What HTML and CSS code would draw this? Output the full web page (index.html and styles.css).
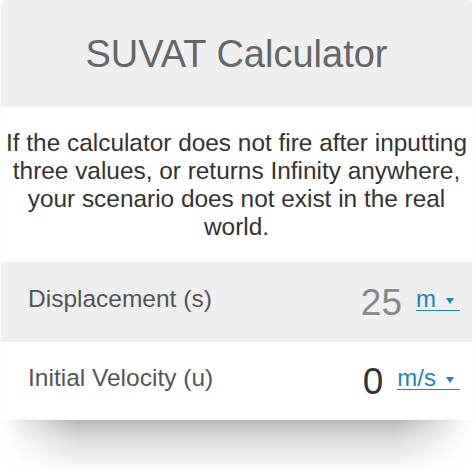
FILE: index.html
```html
<!DOCTYPE html>
<html lang="en">
<head>
<meta charset="UTF-8">
<meta name="viewport" content="width=device-width, initial-scale=1.0">
<title>SUVAT Calculator</title>
<link rel="stylesheet" href="styles.css">
</head>
<body>
<div class="card">
  <div class="card-head">SUVAT Calculator</div>

  <p class="note">If the calculator does not fire after inputting three values, or returns Infinity anywhere, your scenario does not exist in the real world.</p>

  <div class="row shaded">
    <span class="label">Displacement (s)</span>
    <span class="field">
      <span class="value empty">25</span>
      <span class="unit">m<i class="caret"></i></span>
    </span>
  </div>

  <div class="row">
    <span class="label">Initial Velocity (u)</span>
    <span class="field">
      <span class="value">0</span>
      <span class="unit">m/s<i class="caret"></i></span>
    </span>
  </div>
</div>
</body>
</html>
```

FILE: styles.css
```css
body {
  margin: 0;
  min-height: 100vh;
  padding-bottom: 1px;
  box-sizing: border-box;
  background: #fff;
  font-family: 'Liberation Sans', Arial, sans-serif;
}

.card {
  position: relative;
  width: 471px;
  margin-left: 1px;
  background: #fff;
  border-radius: 5px 5px 0 0;
  box-shadow: 0 0 2px rgba(0, 0, 0, 0.08);
}

/* soft shadow under the card */
.card::after {
  content: '';
  position: absolute;
  top: 100%;
  left: 0;
  right: 0;
  height: 54px;
  background: linear-gradient(rgba(0, 0, 0, 0.28), rgba(0, 0, 0, 0.12) 40%, rgba(0, 0, 0, 0.03) 85%, transparent);
  -webkit-mask-image: linear-gradient(to right, transparent, #000 16%, #000 84%, transparent);
  mask-image: linear-gradient(to right, transparent, #000 16%, #000 84%, transparent);
}

.card-head {
  height: 107px;
  display: flex;
  align-items: center;
  justify-content: center;
  background: #efefef;
  border-radius: 5px 5px 0 0;
  color: #666;
  font-size: 38px;
  line-height: 1;
}

.note {
  margin: 0;
  padding: 22px 4px 21px;
  text-align: center;
  color: #333;
  font-size: 24.4px;
  line-height: 28px;
}

.row {
  height: 80px;
  display: flex;
  align-items: center;
  justify-content: space-between;
  padding: 0 12px 0 27px;
}

.row:last-child {
  height: 78px;
}

.shaded {
  background: #efefef;
}

.label {
  margin-bottom: 6px;
  color: #555;
  font-size: 24.5px;
}

.field {
  display: flex;
  align-items: center;
}

.value {
  color: #333;
  font-size: 37px;
  line-height: 1;
}

.value.empty {
  color: #888;
}

.unit {
  margin-left: 14px;
  margin-bottom: 5px;
  padding-right: 6px;
  color: #1b86b4;
  font-size: 24px;
  line-height: 22px;
  border-bottom: 1.5px solid #1b86b4;
}

.caret {
  display: inline-block;
  margin-left: 10px;
  vertical-align: 3px;
  border-left: 4px solid transparent;
  border-right: 4px solid transparent;
  border-top: 6px solid #1b86b4;
}
```
